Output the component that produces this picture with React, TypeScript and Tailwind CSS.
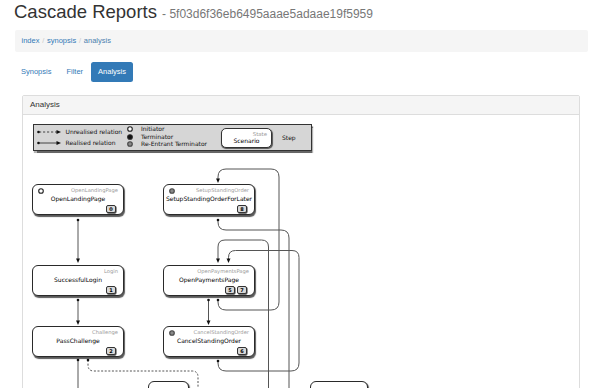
import React from "react";

type CircleKind = "init" | "term" | "reentrant";

function StateCircle({ kind }: { kind: CircleKind }) {
  const fill = kind === "init" ? "#ffffff" : kind === "term" ? "#111111" : "#8a8a8a";
  const stroke = kind === "reentrant" ? "#444444" : "#222222";
  return (
    <svg width="6" height="6" viewBox="0 0 6 6" className="shrink-0">
      <circle cx="3" cy="3" r="2.3" fill={fill} stroke={stroke} strokeWidth="1.1" />
    </svg>
  );
}

function Badge({ n }: { n: string }) {
  return (
    <span className="flex h-[8px] w-[10px] items-center justify-center rounded-[2px] border border-[#333] bg-[#d8d8d8] text-[5px] font-bold leading-none text-black shadow-[0.6px_0.8px_0.6px_rgba(0,0,0,0.7)]">
      {n}
    </span>
  );
}

function Node({
  pos,
  label,
  name,
  circle,
  badges,
  width = "w-[92px]",
}: {
  pos: string;
  label?: string;
  name?: string;
  circle?: CircleKind;
  badges?: string[];
  width?: string;
}) {
  return (
    <div
      className={`absolute ${pos} ${width} flex h-[31px] flex-col rounded-[6px] border border-[#2a2a2a] bg-white font-['DejaVu_Sans',sans-serif] shadow-[1px_1.5px_1px_rgba(0,0,0,0.65)]`}
    >
      <div className="mt-[1.7px] flex h-[8px] items-center justify-between pl-[4.7px] pr-[5px]">
        {circle ? <StateCircle kind={circle} /> : <span />}
        <span className="whitespace-nowrap text-[5.2px] leading-none text-[#9a9a9a]">{label}</span>
      </div>
      <div className="whitespace-nowrap text-center text-[6px] leading-[7px] text-black">{name}</div>
      <div className="mt-auto flex justify-end gap-[2px] pb-[1px] pr-[7px]">
        {(badges || []).map((b) => (
          <Badge key={b} n={b} />
        ))}
      </div>
    </div>
  );
}

function Dot({ x, y }: { x: number; y: number }) {
  return <circle cx={x} cy={y} r="1.3" fill="#111" />;
}

function ArrowDown({ x, y }: { x: number; y: number }) {
  return <polygon points={`${x - 2},${y - 4.5} ${x + 2},${y - 4.5} ${x},${y}`} fill="#111" />;
}

function Edges() {
  const line = { fill: "none", stroke: "#555", strokeWidth: 1 };
  return (
    <svg className="absolute left-0 top-0" width="557" height="245" viewBox="0 0 557 245">
      {/* OpenLandingPage -> Login */}
      <path d="M55 69 V108" {...line} />
      <Dot x={55} y={69} />
      <ArrowDown x={55} y={112} />
      {/* Login -> Challenge */}
      <path d="M55 149 V170" {...line} />
      <Dot x={55} y={149} />
      <ArrowDown x={55} y={174} />
      {/* Challenge down */}
      <path d="M55 209 V245" {...line} />
      <Dot x={55} y={209} />
      {/* Challenge dashed */}
      <path d="M65 209 V214 Q65 220 71 220 H169 Q175 220 175 226 V245" {...line} strokeDasharray="2 1.6" />
      <Dot x={65} y={209} />
      {/* OpenPayments -> SetupStandingOrder loop */}
      <path d="M195 149 V151 Q195 159 203 159 H248 Q256 159 256 151 V26 Q256 18 248 18 H203 Q195 18 195 26 V28" {...line} />
      <Dot x={195} y={149} />
      <ArrowDown x={195} y={32} />
      {/* SetupStandingOrder down */}
      <path d="M195 69 V71 Q195 79 203 79 H258 Q266 79 266 87 V245" {...line} />
      <Dot x={195} y={69} />
      {/* from below into OpenPayments */}
      <path d="M245.5 245 V96 Q245.5 89 238.5 89 H202 Q195 89 195 96 V108" {...line} />
      <ArrowDown x={195} y={112} />
      {/* Cancel -> OpenPayments */}
      <path d="M195 210 V212 Q195 220 203 220 H268 Q276 220 276 212 V106.5 Q276 99.5 269 99.5 H212.5 Q205.5 99.5 205.5 106.5 V108" {...line} />
      <Dot x={195} y={210} />
      <ArrowDown x={205.5} y={112} />
      {/* OpenPayments -> Cancel */}
      <path d="M185.5 149 V170" {...line} />
      <Dot x={185.5} y={149} />
      <ArrowDown x={185.5} y={174} />
    </svg>
  );
}

function Legend() {
  return (
    <div className="flex h-[27px] w-[279px] items-center border border-[#333] bg-[#d6d6d6] font-['DejaVu_Sans',sans-serif] text-[6px] leading-none text-[#111] shadow-[1px_1.5px_1px_rgba(0,0,0,0.6)]">
      <div className="flex w-[90px] shrink-0 flex-col gap-[4px] pl-[3px]">
        <div className="flex h-[7px] items-center gap-[3.5px]">
          <svg width="25" height="6" viewBox="0 0 25 6" className="shrink-0">
            <circle cx="1.5" cy="3" r="1.3" fill="#111" />
            <path d="M2 3 H20" stroke="#333" strokeWidth="0.9" strokeDasharray="2.2 1.8" />
            <polygon points="19.5,1 24,3 19.5,5" fill="#111" />
          </svg>
          <span className="whitespace-nowrap">Unrealised relation</span>
        </div>
        <div className="flex h-[7px] items-center gap-[3.5px]">
          <svg width="25" height="6" viewBox="0 0 25 6" className="shrink-0">
            <circle cx="1.5" cy="3" r="1.3" fill="#111" />
            <path d="M2 3 H20" stroke="#333" strokeWidth="0.9" />
            <polygon points="19.5,1 24,3 19.5,5" fill="#111" />
          </svg>
          <span className="whitespace-nowrap">Realised relation</span>
        </div>
      </div>
      <div className="mb-[2px] ml-[3px] flex w-[85px] shrink-0 flex-col">
        <div className="flex h-[7.7px] items-center gap-[8px]">
          <StateCircle kind="init" />
          <span className="whitespace-nowrap">Initiator</span>
        </div>
        <div className="flex h-[7.7px] items-center gap-[8px]">
          <StateCircle kind="term" />
          <span className="whitespace-nowrap">Terminator</span>
        </div>
        <div className="flex h-[7.7px] items-center gap-[8px]">
          <StateCircle kind="reentrant" />
          <span className="whitespace-nowrap">Re-Entrant Terminator</span>
        </div>
      </div>
      <div className="ml-[9px] flex h-[20px] w-[51px] shrink-0 flex-col rounded-[5px] border border-[#333] bg-white shadow-[0.8px_1px_0.8px_rgba(0,0,0,0.6)]">
        <div className="mt-[2px] h-[6px] pr-[4px] text-right text-[5.4px] leading-[6px] text-[#9a9a9a]">State</div>
        <div className="text-center text-[6px] leading-[7px] text-black">Scenario</div>
      </div>
      <span className="ml-[10px] whitespace-nowrap">Step</span>
    </div>
  );
}

export default function App() {
  return (
    <div className="h-[388px] w-[600px] overflow-hidden bg-white font-['Liberation_Sans',Arial,sans-serif] text-[#333]">
      <div className="pl-[14px] pr-[12px]">
        <h1 className="mt-[2px] whitespace-nowrap text-[18.5px] font-normal leading-[20px] text-[#333]">
          Cascade Reports <small className="text-[12px] text-[#777]">- 5f03d6f36eb6495aaae5adaae19f5959</small>
        </h1>
        <div className="ml-[1px] mt-[5.5px] flex h-[22px] items-center rounded-[2px] bg-[#f5f5f5] pl-[6.5px] text-[7.5px] leading-none">
          <span className="text-[#337ab7]">index</span>
          <span className="px-[2.75px] text-[#ccc]">/</span>
          <span className="text-[#337ab7]">synopsis</span>
          <span className="px-[2.75px] text-[#ccc]">/</span>
          <span className="text-[#4a7fae]">analysis</span>
        </div>
        <div className="mt-[10.5px] flex gap-[1px] text-[7.5px] leading-none">
          <span className="flex h-[20px] items-center rounded-[2.5px] px-[7px] text-[#337ab7]">Synopsis</span>
          <span className="flex h-[20px] items-center rounded-[2.5px] px-[7px] text-[#337ab7]">Filter</span>
          <span className="flex h-[20px] items-center rounded-[2.5px] bg-[#337ab7] px-[7px] text-white">Analysis</span>
        </div>
        <div className="ml-[8px] mt-[13px] h-[320px] w-[558px] rounded-[2px] border border-[#ddd]">
          <div className="flex h-[19px] items-center rounded-t-[2px] border-b border-[#ddd] bg-[#f5f5f5] pl-[7px] text-[8px] leading-none text-[#333]">
            Analysis
          </div>
          <div className="pl-[10px] pt-[9px]">
            <Legend />
            <div className="relative -ml-[10px] h-[245px]">
              <Edges />
              <Node pos="left-[9px] top-[33px]" circle="init" label="OpenLandingPage" name="OpenLandingPage" badges={["0"]} />
              <Node pos="left-[140px] top-[33px]" circle="reentrant" label="SetupStandingOrder" name="SetupStandingOrderForLater" badges={["8"]} />
              <Node pos="left-[9px] top-[114px]" label="Login" name="SuccessfulLogin" badges={["1"]} />
              <Node pos="left-[140px] top-[114px]" label="OpenPaymentsPage" name="OpenPaymentsPage" badges={["5", "7"]} />
              <Node pos="left-[9px] top-[175px]" label="Challenge" name="PassChallenge" badges={["2"]} />
              <Node pos="left-[140px] top-[175px]" circle="reentrant" label="CancelStandingOrder" name="CancelStandingOrder" badges={["6"]} />
              <Node pos="left-[125px] top-[230px]" width="w-[41px]" />
              <Node pos="left-[287px] top-[230px]" width="w-[58px]" />
            </div>
          </div>
        </div>
      </div>
    </div>
  );
}
